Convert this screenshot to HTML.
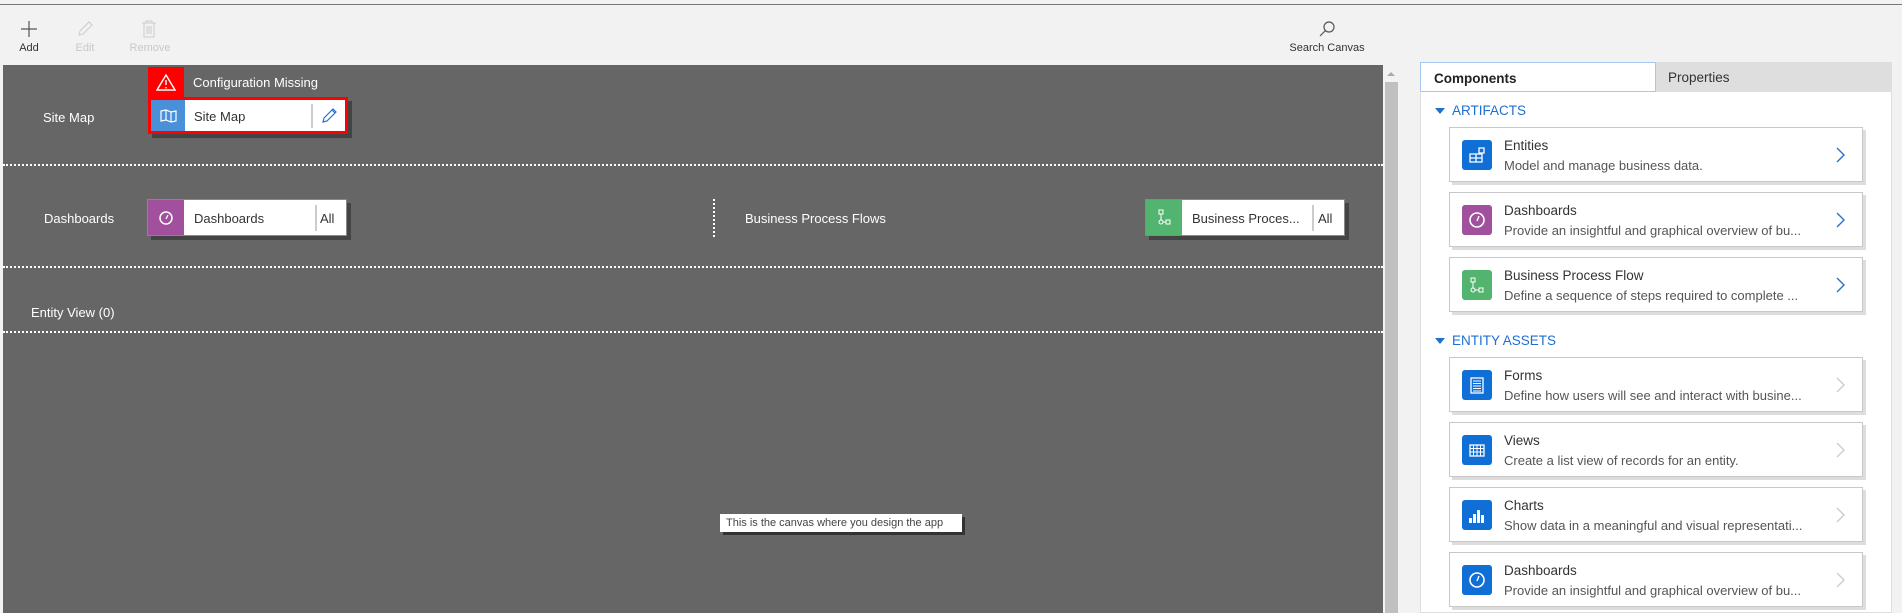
<!DOCTYPE html>
<html><head><style>
*{box-sizing:border-box;margin:0;padding:0}
body{width:1902px;height:613px;background:#f2f2f2;font-family:"Liberation Sans",sans-serif;position:relative;overflow:hidden;color:#333}
.a{position:absolute}
.tl{font-size:11px;text-align:center}
.canvas{left:3px;top:65px;width:1380px;height:548px;background:#666}
.dot{left:0;width:1380px;border-top:2px dotted #fff}
.lbl{color:#fff;font-size:13px}
.card{background:#fff;border:1px solid #888;box-shadow:4px 4px 0 #444}
.ib{position:absolute;left:0;top:0;bottom:0;width:36px}
.ct{position:absolute;font-size:13px;color:#333}
.pc{position:absolute;left:1449px;width:414px;height:55px;background:#fff;border:1px solid #c8c8c8;box-shadow:3px 3px 0 #ddd}
.pc .ic{position:absolute;left:12px;top:12px;width:30px;height:30px;border-radius:3px;background:#0f6fd6}
.pc .t{position:absolute;left:54px;top:10px;font-size:13.5px;color:#333}
.pc .d{position:absolute;left:54px;top:30px;font-size:13px;color:#555;white-space:nowrap}
.pc .ch{position:absolute;left:386px;top:19px}
.hd{position:absolute;left:1435px;font-size:13.5px;color:#1e6fd0}
.hd:before{content:"";position:absolute;left:0;top:5px;border-left:5px solid transparent;border-right:5px solid transparent;border-top:6px solid #1e6fd0}
.hd span{margin-left:17px}
</style></head><body>
<div class="a" style="left:0;top:4px;width:1902px;height:1px;background:#777"></div>
<svg class="a" style="left:20px;top:20px" width="18" height="18"><path d="M9 1v16M1 9h16" stroke="#555" stroke-width="1.2"/></svg>
<div class="a tl" style="left:17px;top:42px;width:24px">Add</div>
<svg class="a" style="left:76px;top:20px" width="18" height="18"><path d="M3 15l1-4 9-9 3 3-9 9z" stroke="#ccc" fill="none"/></svg>
<div class="a tl" style="left:72px;top:42px;width:26px;color:#c8c8c8">Edit</div>
<svg class="a" style="left:141px;top:20px" width="16" height="18"><path d="M1 3h14M5 3V1h6v2M3 3v14h10V3M6 6v8M8 6v8M10 6v8" stroke="#ccc" fill="none"/></svg>
<div class="a tl" style="left:128px;top:42px;width:44px;color:#c8c8c8">Remove</div>
<svg class="a" style="left:1318px;top:20px" width="18" height="18"><circle cx="11" cy="7" r="5" stroke="#555" fill="none" stroke-width="1.2"/><path d="M7.5 10.5L2 16" stroke="#555" stroke-width="1.2"/></svg>
<div class="a tl" style="left:1287px;top:42px;width:80px">Search Canvas</div>
<div class="a canvas">
 <div class="a dot" style="top:99px"></div>
 <div class="a dot" style="top:201px"></div>
 <div class="a dot" style="top:266px"></div>
 <div class="a lbl" style="left:40px;top:45px">Site Map</div>
 <div class="a" style="left:145px;top:2px;width:36px;height:31px;background:#f00"></div>
 <svg class="a" style="left:153px;top:9px" width="20" height="17"><path d="M10 1L19 16H1z" fill="none" stroke="#fff" stroke-width="1.4"/><path d="M10 6v5M10 13v1.5" stroke="#fff" stroke-width="1.4"/></svg>
 <div class="a lbl" style="left:190px;top:10px">Configuration Missing</div>
 <div class="a" style="left:145px;top:32px;width:200px;height:37px;background:#fff;border:3px solid #f00;box-shadow:4px 4px 0 #444">
  <div class="ib" style="width:34px;background:#4a90d9"></div>
  <svg class="a" style="left:9px;top:9px" width="17" height="14"><path d="M1 2l5-1 5 2 5-1v10l-5 1-5-2-5 1zM6 1v10M11 3v10" fill="none" stroke="#fff" stroke-width="1.2"/></svg>
  <div class="ct" style="left:43px;top:9px">Site Map</div>
  <div class="a" style="left:160px;top:4px;width:2px;height:24px;background:#ccc"></div>
  <svg class="a" style="left:170px;top:6px" width="18" height="18"><path d="M2 16l1-4 9-9 3 3-9 9zM11 4l3 3" stroke="#2a6fd0" fill="none" stroke-width="1.2"/></svg>
 </div>
 <div class="a lbl" style="left:41px;top:146px">Dashboards</div>
 <div class="a card" style="left:144px;top:134px;width:200px;height:37px">
  <div class="ib" style="background:#a0509c"></div>
  <svg class="a" style="left:10px;top:10px" width="16" height="16"><circle cx="8" cy="8" r="6" fill="none" stroke="#fff" stroke-width="1.5"/><path d="M8 9l2-4" stroke="#fff" stroke-width="1.3"/></svg>
  <div class="ct" style="left:46px;top:11px">Dashboards</div>
  <div class="a" style="left:167px;top:5px;width:2px;height:26px;background:#ccc"></div>
  <div class="ct" style="left:172px;top:11px">All</div>
 </div>
 <div class="a" style="left:710px;top:134px;height:38px;border-left:2px dotted #fff"></div>
 <div class="a lbl" style="left:742px;top:146px">Business Process Flows</div>
 <div class="a card" style="left:1142px;top:134px;width:200px;height:37px">
  <div class="ib" style="background:#52b46e"></div>
  <svg class="a" style="left:10px;top:9px" width="16" height="18"><rect x="3" y="1" width="4" height="4" fill="none" stroke="#fff"/><path d="M5 5v6" stroke="#fff"/><circle cx="5" cy="13" r="2" fill="none" stroke="#fff"/><path d="M7 13h3" stroke="#fff"/><rect x="10" y="11" width="4" height="4" fill="none" stroke="#fff"/></svg>
  <div class="ct" style="left:46px;top:11px">Business Proces...</div>
  <div class="a" style="left:166px;top:5px;width:2px;height:26px;background:#ccc"></div>
  <div class="ct" style="left:172px;top:11px">All</div>
 </div>
 <div class="a lbl" style="left:28px;top:240px">Entity View (0)</div>
 <div class="a" style="left:717px;top:449px;width:242px;height:18px;background:#fff;box-shadow:3px 3px 0 #333;font-size:11px;color:#444;padding:3px 0 0 6px">This is the canvas where you design the app</div>
</div>
<div class="a" style="left:1385px;top:82px;width:13px;height:531px;background:#c0c0c0"></div>
<div class="a" style="left:1387px;top:72px;border-left:4px solid transparent;border-right:4px solid transparent;border-bottom:4px solid #aaa"></div>
<div class="a" style="left:1420px;top:62px;width:472px;height:551px;background:#fff;border:1px solid #ddd"></div>
<div class="a" style="left:1655px;top:62px;width:237px;height:30px;background:#dedede;font-size:13.5px;padding:8px 0 0 13px">Properties</div>
<div class="a" style="left:1420px;top:62px;width:236px;height:30px;background:#fff;border:1px solid #a6c8f0;font-size:13.5px;font-weight:bold;padding:8px 0 0 13px;color:#222">Components</div>
<div class="hd" style="top:103px"><span>ARTIFACTS</span></div>
<div class="hd" style="top:333px"><span>ENTITY ASSETS</span></div>

<div class="pc" style="top:127px"><div class="ic"><svg width="30" height="30"><path d="M8 14h6v8H8zM14 14h6v8h-6zM8 18h12M17 8h5v5h-5z" fill="none" stroke="#fff" stroke-width="1.3"/></svg></div><div class="t">Entities</div><div class="d">Model and manage business data.</div><svg class="ch" width="10" height="16"><path d="M1 1l7 7-7 7" stroke="#2a6fd0" fill="none" stroke-width="1.4"/></svg></div>
<div class="pc" style="top:192px"><div class="ic" style="background:#a0509c"><svg width="30" height="30"><circle cx="15" cy="15" r="7" fill="none" stroke="#fff" stroke-width="1.6"/><path d="M15 16l2-5" stroke="#fff" stroke-width="1.4"/></svg></div><div class="t">Dashboards</div><div class="d">Provide an insightful and graphical overview of bu...</div><svg class="ch" width="10" height="16"><path d="M1 1l7 7-7 7" stroke="#2a6fd0" fill="none" stroke-width="1.4"/></svg></div>
<div class="pc" style="top:257px"><div class="ic" style="background:#52b46e"><svg width="30" height="30"><rect x="9" y="8" width="4" height="4" fill="none" stroke="#fff"/><path d="M11 12v6" stroke="#fff"/><circle cx="11" cy="20" r="2" fill="none" stroke="#fff"/><path d="M13 20h4" stroke="#fff"/><rect x="17" y="18" width="4" height="4" fill="none" stroke="#fff"/></svg></div><div class="t">Business Process Flow</div><div class="d">Define a sequence of steps required to complete ...</div><svg class="ch" width="10" height="16"><path d="M1 1l7 7-7 7" stroke="#2a6fd0" fill="none" stroke-width="1.4"/></svg></div>

<div class="pc" style="top:357px"><div class="ic"><svg width="30" height="30"><rect x="9" y="8" width="12" height="15" fill="none" stroke="#fff" stroke-width="1.3"/><path d="M11 11h8M11 13.5h8M11 16h8M11 18.5h8M11 21h8" stroke="#fff"/></svg></div><div class="t">Forms</div><div class="d">Define how users will see and interact with busine...</div><svg class="ch" width="10" height="16"><path d="M1 1l7 7-7 7" stroke="#ccc" fill="none" stroke-width="1.4"/></svg></div>
<div class="pc" style="top:422px"><div class="ic"><svg width="30" height="30"><rect x="8" y="10" width="14" height="11" fill="none" stroke="#fff" stroke-width="1.3"/><path d="M8 13.5h14M8 17h14M11.5 10v11M15 10v11M18.5 10v11" stroke="#fff"/></svg></div><div class="t">Views</div><div class="d">Create a list view of records for an entity.</div><svg class="ch" width="10" height="16"><path d="M1 1l7 7-7 7" stroke="#ccc" fill="none" stroke-width="1.4"/></svg></div>
<div class="pc" style="top:487px"><div class="ic"><svg width="30" height="30"><path d="M7 18h3v5H7zM11 14h3v9h-3zM15 10h3v13h-3zM19 15h3v8h-3z" fill="#fff"/></svg></div><div class="t">Charts</div><div class="d">Show data in a meaningful and visual representati...</div><svg class="ch" width="10" height="16"><path d="M1 1l7 7-7 7" stroke="#ccc" fill="none" stroke-width="1.4"/></svg></div>
<div class="pc" style="top:552px"><div class="ic"><svg width="30" height="30"><circle cx="15" cy="15" r="7" fill="none" stroke="#fff" stroke-width="1.6"/><path d="M15 16l2-5" stroke="#fff" stroke-width="1.4"/></svg></div><div class="t">Dashboards</div><div class="d">Provide an insightful and graphical overview of bu...</div><svg class="ch" width="10" height="16"><path d="M1 1l7 7-7 7" stroke="#ccc" fill="none" stroke-width="1.4"/></svg></div>
</body></html>
